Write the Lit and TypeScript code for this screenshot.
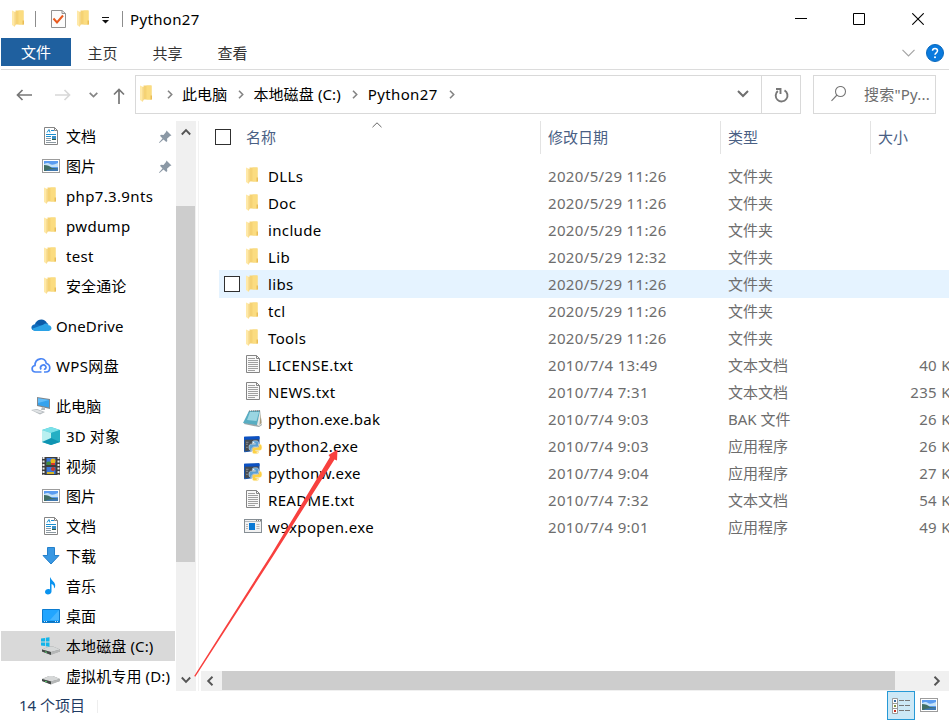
import { LitElement, html, css, svg, nothing } from "lit";
import { customElement, property } from "lit/decorators.js";
import { classMap } from "lit/directives/class-map.js";

const folder = svg`<g transform="translate(-.5 -.5)">
  <path d="M6 1h8v14H6z" fill="#f5d274"/><path d="M9 1h5v14H9z" fill="#fbdc80"/>
  <path d="M13 11h1.500v4H13z" fill="#e9bd58"/>
  <path d="M2.500 1L6 2.600V15l-.7 2.500-2.800-2z" fill="#ffe9a8"/><path d="M6 2.600V15l-.8 2V2.400z" fill="#eec661"/></g>`;

const picture = svg`
  <rect x=".5" y="2.500" width="17" height="13" fill="#fff" stroke="#9c9c9c"/>
  <rect x="2" y="4" width="14" height="10" fill="#5b9cf0"/>
  <path d="M2 7q4-2 6 0t8-1v4H2z" fill="#c5e2f8"/>
  <path d="M2 8q5 0 8 3h6v3H2z" fill="#416f66"/><path d="M5 13l11-2v3H4z" fill="#3f78b0"/>`;

const documentIcon = svg`
  <path d="M2.500.5h10l3 3v14h-13z" fill="#fff" stroke="#858585"/><path d="M12.500.5v3h3" fill="none" stroke="#858585"/>
  <path d="M5 5.500l2-3 1 3M9 3.500h3M4 7.500h10M4 9.500h5" stroke="#1c8fd0" fill="none"/>
  <path d="M4 11.500h5M4 13.500h5M4 15.500h10" stroke="#8d9aa3"/><rect x="10" y="9" width="4" height="4" fill="#3a8fc5"/><path d="M10 12h4v1h-4z" fill="#315d43"/>`;

const textFile = svg`
  <path d="M2.500-.5h10l3 3v14h-13z" fill="#f9f9f9" stroke="#858585"/><path d="M12.500-.5v3h3" fill="none" stroke="#858585"/>
  <path d="M4 2.500h7M4 4.500h10M4 6.500h10M4 8.500h10M4 10.500h10M4 12.500h10M4 14.500h7" stroke="#a0a0a0"/>`;

const snake = "M11.900 0C5.800 0 6.200 2.600 6.200 2.600V5.400h5.800v.8H3.900S0 5.800 0 11.900s3.400 5.900 3.400 5.900h2V15s-.1-3.400 3.300-3.400h5.700s3.200 0 3.200-3.100V3.200S18.200 0 11.900 0z";
const python = svg`<g transform="translate(0 -.7)">
  <path d="M.5 1l14.500-.5v13L.5 15.500z" fill="#454c52" stroke="#1853a8"/><path d="M0 .500L15.500 0v3L0 3.500z" fill="#0b51c4"/>
  <path d="M2 6h2.500M2 8h2M2 11h2" stroke="#858b90"/>
  <g transform="translate(5 4.500) scale(.54)">
    <path d=${snake} fill="#5a9fd4" stroke="#f2f6f8" stroke-width="1"/>
    <path d=${snake} transform="rotate(180 12 12)" fill="#fdd043" stroke="#fbf5dc" stroke-width="1"/>
    <circle cx="8.700" cy="3" r="1.200" fill="#fff"/><circle cx="15.300" cy="21" r="1.200" fill="#fff"/>
  </g></g>`;

const drive = svg`<path d="M0 12l7-3h4l7 3v2l-10 3-8-3z" fill="#8a8d8e"/><path d="M0 12l7-3h4l7 3-9 2.500z" fill="#d6d8d8"/><path d="M9 14.500l9-2.500v2l-9 3.500z" fill="#b5b7b7"/><path d="M0 12l9 2.500v3L0 14z" fill="#434846"/><path d="M3 14.300l2 .6" stroke="#58d06c"/>`;

const icons: Record<string, unknown> = {
  folder,
  picture,
  document: documentIcon,
  text: textFile,
  python,
  drive,
  bak: svg`<path d="M5 1l11-1 2 15-3 2-15-3z" fill="#9ca6a8"/><path d="M5 1h11l-3 14-14-2z" fill="#58adc2"/><path d="M6 2h9l-2.500 9-9.500-1z" fill="#9ad5e2"/><path d="M16 1l2 13-3 2-2-1z" fill="#e4e9e8"/><path d="M16.500 4l1 9-2 2z" fill="#a69a7c"/><path d="M5 1h11" stroke="#70777a" stroke-dasharray="1 1"/>`,
  app: svg`<g transform="translate(0 -1)"><rect x=".5" y="2.500" width="17" height="13" fill="#f2f2f2" stroke="#868e94"/><path d="M1 4.500h16" stroke="#b5babd"/><path d="M12 3.500h1m1 0h1m1 0h1" stroke="#777"/><rect x="5" y="6" width="6" height="7" fill="#0878d4"/><path d="M2 7.500h2M2 9.500h2M2 11.500h2M12.500 7.500h3M12.500 9.500h3M12.500 11.500h3" stroke="#b5b5b5"/></g>`,
  onedrive: svg`<g transform="translate(0 .3) scale(1.100 1)"><path d="M3.500 13.500C-.5 13-.8 8 3.500 7 5 2 11 1.500 13.300 5.300l.8 1.600-5 6.600z" fill="#0f6cbd"/><path d="M6 3.500c3-2.500 7-1.500 8.500 2.200L16 7l-5 2-6.700-2.500z" fill="#0a5aa8"/><path d="M1 11.500L11 7.500c2-2 4-1.600 5 .4 3.500.5 3.500 5.300.2 5.700H4C2.500 13.600 1.500 12.800 1 11.500z" fill="#2ba2e6"/></g>`,
  wps: svg`<path d="M10 12.500c-2-3.500 2.500-6 4.500-3.500 1.500 2-.5 3.500-1.500 2.800M10.500 15h-6C.2 15 0 9.200 4 8.500 4 .5 14.500-.5 15.200 6.200 20.500 8 19.500 15 15 15h-2" fill="none" stroke="#4b86f5" stroke-width="1.700"/>`,
  pc: svg`<path d="M6 0l13 2v10L6 9z" fill="#81888e"/><path d="M7 1.200l11 1.700v7.600L7 8z" fill="#36a3ee"/><path d="M7 1.200l11 1.700-11 3z" fill="#62bdfa"/><path d="M11 10l3 1v2h-4zM0 13l6-1 8 3-5 2.500z" fill="#b3b9bd"/><path d="M1 13.500l5-.8 6 2.300-3 1.300z" fill="#dfe2e4"/>`,
  cube: svg`<path d="M0 3l9-3 9 3v12l-9 3-9-3z" fill="#3bbccc"/><path d="M0 3l9-3 9 3-9 3z" fill="#7be1e9"/><path d="M0 3l9 3v8L0 15z" fill="#b9f0f0"/><path d="M9 6l9-3v12l-9-3z" fill="#25afc4"/><path d="M0 15l9-4 9 4-9 3z" fill="#0f94b2"/>`,
  video: svg`<path d="M0 0h18v18H0z" fill="#3d3d3d"/><path d="M1.500 0v18M16.500 0v18" stroke="#eee" stroke-width="2" stroke-dasharray="2 1.500"/><path d="M4.500 1h9v7h-9zM4.500 10h9v7h-9z" fill="#3b78dc"/><path d="M4.500 5q4-2 9 3h-9z" fill="#438c3b"/><circle cx="11" cy="4" r="2.500" fill="#e8b51d"/><path d="M9 6h4v2H9z" fill="#d9372b"/><circle cx="11" cy="12" r="2" fill="#c63829"/><path d="M5 15h7v2H5z" fill="#d7b629"/>`,
  download: svg`<path d="M5.500.5h7v8h4.500L9 17 1 8.500h4.500z" fill="#3998e3" stroke="#2480cb"/>`,
  music: svg`<path d="M8.500.5c.5 3 5.200 4.500 4.700 8.500-.2 1.500-.8 2-1.200 2.500.3-3-1-4-2.500-4.500v7.500C9.500 18 3 18.500 3 15c0-2.500 3-3.500 5-2.500V.5z" fill="#0a93ef"/>`,
  desktop: svg`<path d="M.5 2.500h17v13H.5z" fill="#21a5ff" stroke="#0c7cd0"/><path d="M17 3v10L8 13z" fill="#45b5ff"/><path d="M1 14.500h16" stroke="#0b73bd"/><path d="M2 14.500h1m1 0h1m8 0h1m1 0h1" stroke="#cce9ff"/>`,
  windows: svg`<g transform="translate(0 .5)">${drive}</g><path d="M-1 1.500l4-.6v3.700h-4zM3.800.8L7.500.2v4.400H3.800zM-1 5.500h4v3.600l-4-.5zM3.800 5.500h3.700v4.200l-3.700-.5z" fill="#12b5ea"/>`,
};

@customElement("shell-icon")
class ShellIcon extends LitElement {
  @property() name = "";
  static styles = css`
    :host { display: block; flex: none; width: 18px; height: 18px; }
    .glyph { display: block; overflow: visible; }
  `;
  render() {
    return html`<svg class="glyph" width="18" height="18" viewBox="0 0 18 18">${icons[this.name]}</svg>`;
  }
}

interface Place { icon: string; label: string; root?: boolean; pinned?: boolean; gap?: boolean; selected?: boolean; latin?: boolean }

const places: Place[] = [
  { icon: "document", label: "文档", pinned: true },
  { icon: "picture", label: "图片", pinned: true },
  { icon: "folder", label: "php7.3.9nts", latin: true },
  { icon: "folder", label: "pwdump", latin: true },
  { icon: "folder", label: "test", latin: true },
  { icon: "folder", label: "安全通论" },
  { icon: "onedrive", label: "OneDrive", root: true, gap: true },
  { icon: "wps", label: "WPS网盘", root: true, gap: true, latin: true },
  { icon: "pc", label: "此电脑", root: true, gap: true },
  { icon: "cube", label: "3D 对象" },
  { icon: "video", label: "视频" },
  { icon: "picture", label: "图片" },
  { icon: "document", label: "文档" },
  { icon: "download", label: "下载" },
  { icon: "music", label: "音乐" },
  { icon: "desktop", label: "桌面" },
  { icon: "windows", label: "本地磁盘 (C:)", selected: true },
  { icon: "drive", label: "虚拟机专用 (D:)" },
];

const files: [string, string, string, string, string][] = [
  ["folder", "DLLs", "2020/5/29 11:26", "文件夹", ""],
  ["folder", "Doc", "2020/5/29 11:26", "文件夹", ""],
  ["folder", "include", "2020/5/29 11:26", "文件夹", ""],
  ["folder", "Lib", "2020/5/29 12:32", "文件夹", ""],
  ["folder", "libs", "2020/5/29 11:26", "文件夹", ""],
  ["folder", "tcl", "2020/5/29 11:26", "文件夹", ""],
  ["folder", "Tools", "2020/5/29 11:26", "文件夹", ""],
  ["text", "LICENSE.txt", "2010/7/4 13:49", "文本文档", "40 KB"],
  ["text", "NEWS.txt", "2010/7/4 7:31", "文本文档", "235 KB"],
  ["bak", "python.exe.bak", "2010/7/4 9:03", "BAK 文件", "26 KB"],
  ["python", "python2.exe", "2010/7/4 9:03", "应用程序", "26 KB"],
  ["python", "pythonw.exe", "2010/7/4 9:04", "应用程序", "27 KB"],
  ["text", "README.txt", "2010/7/4 7:32", "文本文档", "54 KB"],
  ["app", "w9xpopen.exe", "2010/7/4 9:01", "应用程序", "49 KB"],
];

const stroke = (w: number, h: number, d: string, color: string, width = 1) =>
  html`<svg class="glyph" width=${w} height=${h} viewBox="0 0 ${w} ${h}"><path d=${d} fill="none" stroke=${color} stroke-width=${width} /></svg>`;

@customElement("app-root")
class AppRoot extends LitElement {
  static styles = css`
    :host { display: block; position: relative; width: 949px; height: 721px; overflow: hidden; background: #fff; color: #000;
      font: 15px/20px "Noto Sans", "Noto Sans CJK SC", sans-serif; }
    * { box-sizing: border-box; }
    .glyph { display: block; flex: none; }
    .window { display: flex; flex-direction: column; height: 100%; padding-left: 1px; white-space: nowrap; }
    .title { display: flex; align-items: center; height: 38px; padding-left: 9px; }
    .rule { width: 1px; height: 16px; background: #8d8d8d; }
    .rule.a { margin: 0 15px 0 7px; }
    .rule.b { margin: 0 7px 0 13px; }
    .second { margin-left: 8px; }
    .more { margin-left: 9px; margin-top: 3px; }
    .grow { flex: 1; }
    .caption { display: flex; align-items: center; gap: 46px; padding-right: 25px; }
    .caption .glyph:not(:last-child) { margin: 0 1px 0 -1px; }
    .ribbon { display: flex; height: 32px; border-bottom: 1px solid #dcdcdc; color: #333; }
    .tab { width: 65px; text-align: center; line-height: 30px; }
    .tab.file { width: 70px; height: 28px; background: #1f609f; color: #fff; line-height: 29px; margin-right: -1px; }
    .help { display: flex; align-items: center; gap: 11px; padding-right: 5px; height: 30px; }
    .address { display: flex; align-items: center; height: 51px; padding: 0 13px 2px 15px; }
    .nav { display: flex; align-items: center; width: 119px; }
    .fwd { margin-left: 23px; } .recent { margin-left: 18px; } .up { margin: 2px 0 0 15px; }
    .box { display: flex; align-items: center; height: 39px; border: 1px solid #d9d9d9; padding-bottom: 1px; }
    .path { width: 666px; padding-left: 2px; }
    .crumb1 { margin: 0 9px 0 11px; } .crumb2 { margin: 0 9px 0 11px; } .crumb3 { margin: 0 10px 0 11px; } .crumb4 { margin-left: 11px; }
    .reload { display: flex; align-items: center; justify-content: center; width: 39px; height: 37px; margin: 1px 0 0 12px; border-left: 1px solid #d9d9d9; }
    .search { width: 123px; margin-left: 12px; padding-left: 17px; color: #6d6d6d; }
    .search-text { margin-left: 17px; letter-spacing: .2px; }
    .latin { letter-spacing: .35px; }
    .mixed { letter-spacing: .12px; }
    .main { display: flex; height: 570px; }
    .side { width: 175px; }
    .place { display: flex; align-items: center; height: 30px; width: 174px; padding: 0 3px 0 41px; }
    .place.root { padding-left: 30px; } .place.root .name { margin-left: 7px; }
    .place.gap { margin-top: 10px; }
    .place.selected { background: #d9d9d9; }
    .name { margin-left: 6px; flex: 1; }
    .vbar { display: flex; flex-direction: column; align-items: center; width: 20px; background: #f0f0f0; padding-right: 1px; }
    .vthumb { width: 19px; height: 356px; background: #cdcdcd; align-self: flex-start; flex: none; }
    .vup { height: 85px; padding-top: 7px; } .vdown { flex: 1; display: flex; align-items: flex-end; padding-bottom: 7px; }
    .split { width: 3px; border-left: 1px solid #f2f2f2; margin-left: 2px; }
    .pane { display: flex; flex-direction: column; flex: 1; min-width: 0; overflow: hidden; }
    .head { display: grid; grid-template-columns: 340px 180px 150px 90px; height: 33px; color: #4a6084; }
    .col { display: flex; align-items: center; padding: 0 0 2px 7px; border-right: 1px solid #e3e3e3; }
    .col:last-child { border: 0; }
    .col.first { padding-left: 14px; gap: 15px; position: relative; }
    .sort { position: absolute; left: 171px; top: 1px; }
    .check { width: 16px; height: 16px; border: 1px solid #303030; background: #fff; flex: none; }
    .rows { flex: 1; padding-top: 8px; }
    .row { display: grid; grid-template-columns: 321px 180px 150px 93px; height: 27px; margin-left: 18px; color: #6d6d6d; }
    .row.hot { background: #e5f3ff; box-shadow: 0 1px #e5f3ff; }
    .cell { display: flex; align-items: center; padding: 0 0 0 8px; }
    .cell.lead { padding-left: 5px; color: #000; }
    .slot { width: 20px; }
    .label { margin-left: 6px; }
    .size { justify-content: flex-end; padding: 0 2px 0 0; }
    .hbar { display: flex; align-items: center; height: 20px; background: #f0f0f0; }
    .hleft { width: 21px; padding-left: 5px; }
    .hthumb { width: 673px; height: 19px; background: #cdcdcd; align-self: flex-start; }
    .hright { margin-left: 38px; }
    .status { display: flex; align-items: center; height: 30px; padding-left: 18px; color: #1f3b63; }
    .count { margin-top: -2px; }
    .tick { width: 1px; height: 13px; background: #eee; margin-left: 12px; }
    .view { display: flex; align-items: center; justify-content: center; width: 28px; height: 29px; background: #cce8f6; border: 1px solid #2699d6; align-self: flex-start; }
    .thumbs { margin: 0 11px 2px 5px; }
    .arrow { position: absolute; left: 0; top: 0; }
  `;

  render() {
    const chevron = stroke(6, 9, "M1 .8l3.700 3.700L1 8.200", "#858585", 1.6);
    return html`
      <div class="window">
        <div class="title">
          <shell-icon name="folder"></shell-icon><i class="rule a"></i>
          <svg class="glyph" width="16" height="18" viewBox="0 0 16 18"><path d="M.5.5h10.500l3.500 3v14H.5z" fill="#fcfcfc" stroke="#929292"/><path d="M11 .5v3h3.500" fill="none" stroke="#929292"/><path d="M2.500 8.500l3.500 4 6-7" fill="none" stroke="#e95b20" stroke-width="2"/></svg>
          <shell-icon name="folder" class="second"></shell-icon>
          <svg class="glyph more" width="7" height="7"><path d="M0 .5h7" stroke="#111"/><path d="M0 3h7L3.500 6.500z" fill="#111"/></svg>
          <i class="rule b"></i><span class="latin">Python27</span><i class="grow"></i>
          <div class="caption">
            ${stroke(12, 12, "M0 5.500h12", "#000")}${stroke(12, 12, "M.5.5h11v11H.5z", "#000")}${stroke(12, 12, "M.3.3l11.400 11.400M11.700.3L.3 11.700", "#000", 1.1)}
          </div>
        </div>
        <div class="ribbon">
          <span class="tab file">文件</span><span class="tab">主页</span><span class="tab">共享</span><span class="tab">查看</span><i class="grow"></i>
          <div class="help">
            ${stroke(13, 8, "M.5.8l6 6 6-6", "#a5a5a5", 1.2)}
            <svg class="glyph" width="18" height="18" viewBox="0 0 18 18"><circle cx="9" cy="9" r="8.500" fill="#0a7add" stroke="#0868bd"/><path d="M6.500 6.800c0-3 5-3 5 0 0 2-2.500 2-2.500 4" fill="none" stroke="#fff" stroke-width="1.500"/><circle cx="9" cy="13.300" r="1" fill="#fff"/></svg>
          </div>
        </div>
        <div class="address">
          <div class="nav">
            ${stroke(16, 12, "M16 6H1.500M6.500 1l-5 5 5 5", "#777", 1.7)}
            <div class="fwd">${stroke(16, 12, "M0 6h14.500M9.500 1l5 5-5 5", "#d8d8d8", 1.7)}</div>
            <div class="recent">${stroke(9, 6, "M.7.8l3.800 3.800L8.300.8", "#858585", 1.7)}</div>
            <div class="up">${stroke(12, 16, "M6 16V1.500M1 6.500l5-5 5 5", "#777", 1.7)}</div>
          </div>
          <div class="box path">
            <shell-icon name="folder"></shell-icon>
            <div class="crumb1">${chevron}</div><span class="mixed">此电脑</span>
            <div class="crumb2">${chevron}</div><span class="mixed">本地磁盘 (C:)</span>
            <div class="crumb3">${chevron}</div><span class="latin">Python27</span>
            <div class="crumb4">${chevron}</div>
            <i class="grow"></i>${stroke(12, 8, "M1 1l5 5 5-5", "#6f6f6f", 2)}
            <div class="reload">${stroke(16, 16, "M4.800 4a5.900 5.900 0 1 0 6.700-.6M3 2h4.500v5", "#777", 1.9)}</div>
          </div>
          <div class="box search">${stroke(16, 16, "M14.500 5.500a5 5 0 1 1-10 0 5 5 0 0 1 10 0zM6 9L.5 14.800", "#777", 1.1)}<span class="search-text">搜索"Py...</span></div>
        </div>
        <div class="main">
          <div class="side">
            ${places.map((p) => html`
              <div class=${classMap({ place: true, root: !!p.root, gap: !!p.gap, selected: !!p.selected })}>
                <shell-icon name=${p.icon}></shell-icon><span class=${classMap({ name: true, latin: !!p.latin, mixed: !p.latin })}>${p.label}</span>
                ${p.pinned ? html`<svg class="glyph" width="13" height="13" viewBox="0 0 13 13"><path d="M7.500.5l5 5-1.500.5-3 2.700.3 2.300-1 1L4.500 9.500.5 13 0 12.500l3.500-4L1 5.700l1-1 2.500.3L7 2z" fill="#8b98a5"/></svg>` : nothing}
              </div>`)}
          </div>
          <div class="vbar">
            <div class="vup">${stroke(10, 8, "M.8 6.500L5 2.200l4.200 4.300", "#555", 1.9)}</div>
            <div class="vthumb"></div>
            <div class="vdown">${stroke(10, 8, "M.8 1.500L5 5.800l4.200-4.300", "#555", 1.9)}</div>
          </div>
          <div class="split"></div>
          <div class="pane">
            <div class="head">
              <div class="col first"><i class="check"></i>名称<div class="sort">${stroke(10, 6, "M.5 5.200L5 .8l4.500 4.400", "#666")}</div></div>
              <div class="col">修改日期</div><div class="col">类型</div><div class="col">大小</div>
            </div>
            <div class="rows">
              ${files.map(([icon, name, date, type, size]) => html`
                <div class=${classMap({ row: true, hot: name === "libs" })}>
                  <div class="cell lead"><div class="slot">${name === "libs" ? html`<i class="glyph check"></i>` : nothing}</div><shell-icon name=${icon}></shell-icon><span class="label latin">${name}</span></div>
                  <div class="cell latin">${date}</div><div class="cell">${type}</div><div class="cell size latin">${size}</div>
                </div>`)}
            </div>
            <div class="hbar">
              <div class="hleft">${stroke(8, 10, "M6.500.8L2.200 5l4.300 4.200", "#555", 1.9)}</div>
              <div class="hthumb"></div>
              <div class="hright">${stroke(8, 10, "M1.500.8L5.800 5 1.500 9.200", "#555", 1.9)}</div>
            </div>
          </div>
        </div>
        <div class="status">
          <span class="count">14 个项目</span><i class="tick"></i><i class="grow"></i>
          <div class="view"><svg class="glyph" width="18" height="16" viewBox="0 0 18 16"><path d="M.5.5h5v15h-5zM.5 5.500h5M.5 10.500h5" fill="#fff" stroke="#999"/><path d="M7 2.500h5m1 0h5M7 7.500h5m1 0h5M7 12.500h5m1 0h5" stroke="#777"/><path d="M2 2h2v2H2z" fill="#386a9c"/><path d="M2 7h2v2H2z" fill="#809342"/><path d="M2 12h2v2H2z" fill="#c32f20"/></svg></div>
          <shell-icon class="thumbs" name="picture"></shell-icon>
        </div>
      </div>
      <svg class="arrow" width="949" height="721"><path d="M194.200 676l77.300-122 58.500-97-1.500-2 9-5.500-.5 11-2.500-1L273.500 555.500 195.300 676.800z" fill="#f8403e"/></svg>
    `;
  }
}
